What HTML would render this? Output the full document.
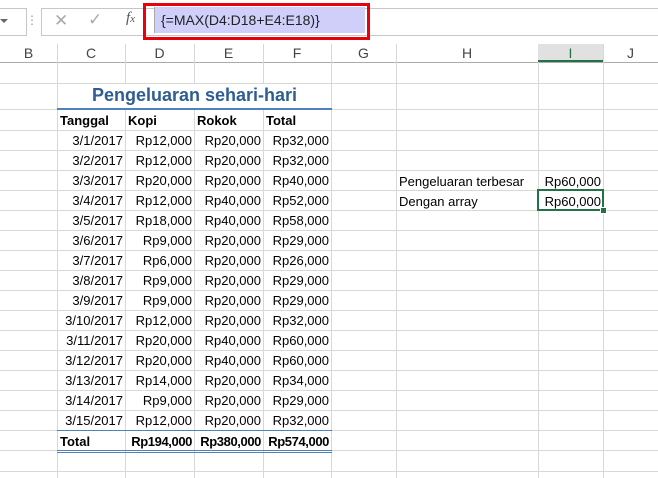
<!DOCTYPE html><html><head><style>
body{margin:0;width:658px;height:478px;overflow:hidden;background:#fff;font-family:"Liberation Sans",sans-serif;position:relative}
.a{position:absolute}
.v{position:absolute;top:62px;bottom:0;width:1px;background:#d8d8d8}
.h{position:absolute;left:0;right:0;height:1px;background:#d8d8d8}
.hd{position:absolute;top:44px;height:18px;font-size:14px;color:#444;text-align:center;line-height:19px}
.c{position:absolute;font-size:13px;height:20px;line-height:22px;color:#000;white-space:nowrap}
.r{text-align:right}
</style></head><body>
<div class="a" style="left:0;top:8px;width:26px;height:26px;border:1px solid #c6c6c6;border-left:none"></div>
<div class="a" style="left:0;top:19px;width:0;height:0;border-left:4px solid transparent;border-right:4px solid transparent;border-top:4px solid #666"></div>
<div class="a" style="left:26px;top:13px;color:#999;font-size:12px">⋮</div>
<div class="a" style="left:41px;top:8px;width:616px;height:26px;border:1px solid #c6c6c6;border-right:none"></div>
<div class="a" style="left:54px;top:11px;color:#aaa;font-size:17px">✕</div>
<div class="a" style="left:88px;top:10px;color:#aaa;font-size:17px">✓</div>
<div class="a" style="left:126px;top:10px;color:#555;font-size:15px;font-family:'Liberation Serif',serif;font-style:italic">f<span style="font-size:11px">x</span></div>
<div class="a" style="left:143px;top:3px;width:221px;height:31px;border:3px solid #e8000b"></div>
<div class="a" style="left:154px;top:7px;width:210px;height:26px;background:#cfcffa;border-left:1px solid #aaa"></div>
<div class="a" style="left:161px;top:12px;font-size:14px;color:#222">{=MAX(D4:D18+E4:E18)}</div>
<div class="h" style="top:62px;background:#ababab"></div>
<div class="a" style="left:538px;top:44px;width:65px;height:18px;background:#e1e1e1"></div>
<div class="a" style="left:538px;top:60px;width:65px;height:2px;background:#217346"></div>
<div class="hd" style="left:0;width:57px">B</div>
<div class="hd" style="left:57px;width:68px">C</div>
<div class="hd" style="left:125px;width:69px">D</div>
<div class="hd" style="left:194px;width:69px">E</div>
<div class="hd" style="left:263px;width:68px">F</div>
<div class="hd" style="left:331px;width:65px">G</div>
<div class="hd" style="left:396px;width:142px">H</div>
<div class="hd" style="left:538px;width:65px;color:#217346">I</div>
<div class="hd" style="left:603px;width:55px">J</div>
<div class="a" style="left:57px;top:44px;width:1px;height:18px;background:#d8d8d8"></div>
<div class="a" style="left:125px;top:44px;width:1px;height:18px;background:#d8d8d8"></div>
<div class="a" style="left:194px;top:44px;width:1px;height:18px;background:#d8d8d8"></div>
<div class="a" style="left:263px;top:44px;width:1px;height:18px;background:#d8d8d8"></div>
<div class="a" style="left:331px;top:44px;width:1px;height:18px;background:#d8d8d8"></div>
<div class="a" style="left:396px;top:44px;width:1px;height:18px;background:#d8d8d8"></div>
<div class="a" style="left:603px;top:44px;width:1px;height:18px;background:#d8d8d8"></div>
<div class="v" style="left:57px"></div><div class="v" style="left:125px"></div><div class="v" style="left:194px"></div><div class="v" style="left:263px"></div><div class="v" style="left:331px"></div><div class="v" style="left:396px"></div><div class="v" style="left:538px"></div><div class="v" style="left:603px"></div>
<div class="h" style="top:83px"></div><div class="h" style="top:109px"></div>
<div class="h" style="top:130px"></div><div class="h" style="top:150px"></div><div class="h" style="top:170px"></div><div class="h" style="top:190px"></div><div class="h" style="top:210px"></div><div class="h" style="top:230px"></div><div class="h" style="top:250px"></div><div class="h" style="top:270px"></div><div class="h" style="top:290px"></div><div class="h" style="top:310px"></div><div class="h" style="top:330px"></div><div class="h" style="top:350px"></div><div class="h" style="top:370px"></div><div class="h" style="top:390px"></div><div class="h" style="top:410px"></div><div class="h" style="top:430px"></div><div class="h" style="top:450px"></div><div class="h" style="top:471px"></div>
<div class="a" style="left:58px;top:84px;width:273px;height:24px;background:#fff"></div>
<div class="a" style="left:58px;top:85px;width:273px;text-align:center;font-size:18px;font-weight:bold;color:#2e5d92">Pengeluaran sehari-hari</div>
<div class="a" style="left:57px;top:108px;width:275px;height:2px;background:#4f81bd"></div>
<div class="c" style="left:60px;top:110px;font-weight:bold">Tanggal</div>
<div class="c" style="left:128px;top:110px;font-weight:bold">Kopi</div>
<div class="c" style="left:197px;top:110px;font-weight:bold">Rokok</div>
<div class="c" style="left:266px;top:110px;font-weight:bold">Total</div>
<div class="a" style="left:57px;top:430px;width:275px;height:1px;background:#4f81bd"></div>
<div class="a" style="left:57px;top:450px;width:275px;height:1px;background:#4f81bd"></div>
<div class="a" style="left:57px;top:452px;width:275px;height:1px;background:#4f81bd"></div>
<div class="c r" style="left:57px;width:66px;top:130px">3/1/2017</div><div class="c r" style="left:125px;width:67px;top:130px">Rp12,000</div><div class="c r" style="left:194px;width:67px;top:130px">Rp20,000</div><div class="c r" style="left:263px;width:66px;top:130px">Rp32,000</div>
<div class="c r" style="left:57px;width:66px;top:150px">3/2/2017</div><div class="c r" style="left:125px;width:67px;top:150px">Rp12,000</div><div class="c r" style="left:194px;width:67px;top:150px">Rp20,000</div><div class="c r" style="left:263px;width:66px;top:150px">Rp32,000</div>
<div class="c r" style="left:57px;width:66px;top:170px">3/3/2017</div><div class="c r" style="left:125px;width:67px;top:170px">Rp20,000</div><div class="c r" style="left:194px;width:67px;top:170px">Rp20,000</div><div class="c r" style="left:263px;width:66px;top:170px">Rp40,000</div>
<div class="c r" style="left:57px;width:66px;top:190px">3/4/2017</div><div class="c r" style="left:125px;width:67px;top:190px">Rp12,000</div><div class="c r" style="left:194px;width:67px;top:190px">Rp40,000</div><div class="c r" style="left:263px;width:66px;top:190px">Rp52,000</div>
<div class="c r" style="left:57px;width:66px;top:210px">3/5/2017</div><div class="c r" style="left:125px;width:67px;top:210px">Rp18,000</div><div class="c r" style="left:194px;width:67px;top:210px">Rp40,000</div><div class="c r" style="left:263px;width:66px;top:210px">Rp58,000</div>
<div class="c r" style="left:57px;width:66px;top:230px">3/6/2017</div><div class="c r" style="left:125px;width:67px;top:230px">Rp9,000</div><div class="c r" style="left:194px;width:67px;top:230px">Rp20,000</div><div class="c r" style="left:263px;width:66px;top:230px">Rp29,000</div>
<div class="c r" style="left:57px;width:66px;top:250px">3/7/2017</div><div class="c r" style="left:125px;width:67px;top:250px">Rp6,000</div><div class="c r" style="left:194px;width:67px;top:250px">Rp20,000</div><div class="c r" style="left:263px;width:66px;top:250px">Rp26,000</div>
<div class="c r" style="left:57px;width:66px;top:270px">3/8/2017</div><div class="c r" style="left:125px;width:67px;top:270px">Rp9,000</div><div class="c r" style="left:194px;width:67px;top:270px">Rp20,000</div><div class="c r" style="left:263px;width:66px;top:270px">Rp29,000</div>
<div class="c r" style="left:57px;width:66px;top:290px">3/9/2017</div><div class="c r" style="left:125px;width:67px;top:290px">Rp9,000</div><div class="c r" style="left:194px;width:67px;top:290px">Rp20,000</div><div class="c r" style="left:263px;width:66px;top:290px">Rp29,000</div>
<div class="c r" style="left:57px;width:66px;top:310px">3/10/2017</div><div class="c r" style="left:125px;width:67px;top:310px">Rp12,000</div><div class="c r" style="left:194px;width:67px;top:310px">Rp20,000</div><div class="c r" style="left:263px;width:66px;top:310px">Rp32,000</div>
<div class="c r" style="left:57px;width:66px;top:330px">3/11/2017</div><div class="c r" style="left:125px;width:67px;top:330px">Rp20,000</div><div class="c r" style="left:194px;width:67px;top:330px">Rp40,000</div><div class="c r" style="left:263px;width:66px;top:330px">Rp60,000</div>
<div class="c r" style="left:57px;width:66px;top:350px">3/12/2017</div><div class="c r" style="left:125px;width:67px;top:350px">Rp20,000</div><div class="c r" style="left:194px;width:67px;top:350px">Rp40,000</div><div class="c r" style="left:263px;width:66px;top:350px">Rp60,000</div>
<div class="c r" style="left:57px;width:66px;top:370px">3/13/2017</div><div class="c r" style="left:125px;width:67px;top:370px">Rp14,000</div><div class="c r" style="left:194px;width:67px;top:370px">Rp20,000</div><div class="c r" style="left:263px;width:66px;top:370px">Rp34,000</div>
<div class="c r" style="left:57px;width:66px;top:390px">3/14/2017</div><div class="c r" style="left:125px;width:67px;top:390px">Rp9,000</div><div class="c r" style="left:194px;width:67px;top:390px">Rp20,000</div><div class="c r" style="left:263px;width:66px;top:390px">Rp29,000</div>
<div class="c r" style="left:57px;width:66px;top:410px">3/15/2017</div><div class="c r" style="left:125px;width:67px;top:410px">Rp12,000</div><div class="c r" style="left:194px;width:67px;top:410px">Rp20,000</div><div class="c r" style="left:263px;width:66px;top:410px">Rp32,000</div>
<div class="c" style="left:60px;top:431px;font-weight:bold">Total</div>
<div class="c r" style="left:125px;width:67px;top:431px;font-weight:bold;letter-spacing:-0.4px">Rp194,000</div>
<div class="c r" style="left:194px;width:67px;top:431px;font-weight:bold;letter-spacing:-0.4px">Rp380,000</div>
<div class="c r" style="left:263px;width:66px;top:431px;font-weight:bold;letter-spacing:-0.4px">Rp574,000</div>
<div class="c" style="left:399px;top:171px">Pengeluaran terbesar</div>
<div class="c r" style="left:538px;width:63px;top:171px">Rp60,000</div>
<div class="c" style="left:399px;top:191px">Dengan array</div>
<div class="a" style="left:537px;top:189px;width:63px;height:18px;border:2px solid #217346;background:#fff"></div>
<div class="a" style="left:600px;top:207px;width:5px;height:5px;background:#217346;border:1px solid #fff"></div>
<div class="c r" style="left:538px;width:63px;top:191px">Rp60,000</div>
</body></html>
